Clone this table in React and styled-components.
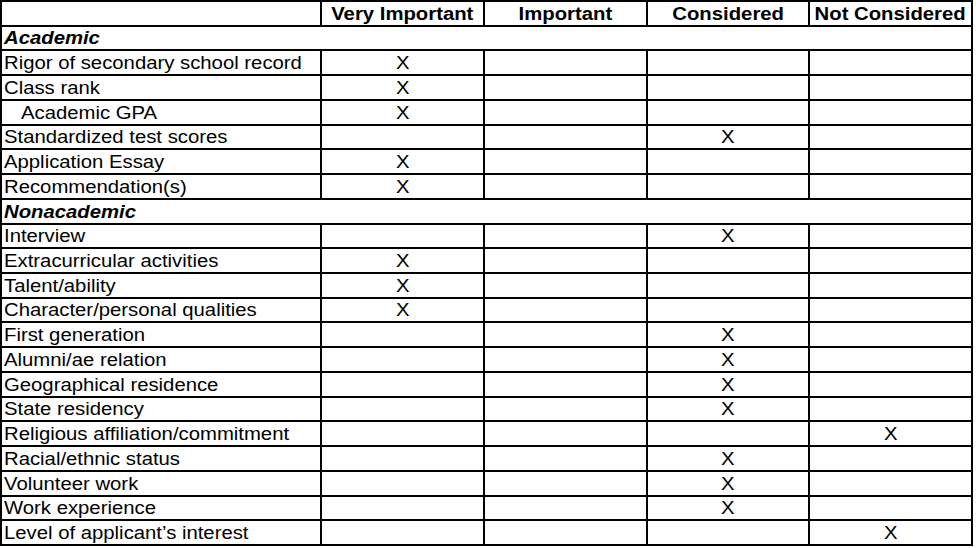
import React from "react";
import styled, { createGlobalStyle } from "styled-components";

const Global = createGlobalStyle`
  html, body { margin: 0; padding: 0; background: #fff; }
  body { font-family: "Liberation Sans", Arial, sans-serif; color: #000; }
`;

const Table = styled.div`
  display: grid;
  grid-template-columns: 318px 161px 161px 160px 161px;
  grid-template-rows: repeat(22, 1fr);
  gap: 2px;
  padding: 2px;
  width: 973px;
  height: 546px;
  box-sizing: border-box;
  background: #000;
`;

const Cell = styled.div`
  background: #fff;
  display: flex;
  align-items: center;
  justify-content: ${(p) => (p.$center ? "center" : "flex-start")};
  padding-left: ${(p) => (p.$center ? 0 : p.$indent ? 19 : 2)}px;
  padding-top: 2px;
  box-sizing: border-box;
  overflow: hidden;
  min-width: 0;
  min-height: 0;
  grid-column: ${(p) => (p.$span ? "1 / -1" : "auto")};
`;

const Label = styled.span`
  display: inline-block;
  font-size: 17.5px;
  line-height: 1.1;
  white-space: nowrap;
  font-weight: ${(p) => (p.$bold ? 700 : 400)};
  font-style: ${(p) => (p.$italic ? "italic" : "normal")};
  transform: scaleX(1.16);
  transform-origin: ${(p) => (p.$center ? "center" : "left")} center;
`;

const headers = ["Very Important", "Important", "Considered", "Not Considered"];

const rows = [
  { cat: "Academic" },
  { label: "Rigor of secondary school record", mark: 0 },
  { label: "Class rank", mark: 0 },
  { label: "Academic GPA", mark: 0, indent: true },
  { label: "Standardized test scores", mark: 2 },
  { label: "Application Essay", mark: 0 },
  { label: "Recommendation(s)", mark: 0 },
  { cat: "Nonacademic" },
  { label: "Interview", mark: 2 },
  { label: "Extracurricular activities", mark: 0 },
  { label: "Talent/ability", mark: 0 },
  { label: "Character/personal qualities", mark: 0 },
  { label: "First generation", mark: 2 },
  { label: "Alumni/ae relation", mark: 2 },
  { label: "Geographical residence", mark: 2 },
  { label: "State residency", mark: 2 },
  { label: "Religious affiliation/commitment", mark: 3 },
  { label: "Racial/ethnic status", mark: 2 },
  { label: "Volunteer work", mark: 2 },
  { label: "Work experience", mark: 2 },
  { label: "Level of applicant\u2019s interest", mark: 3 },
];

export default function App() {
  return (
    <>
      <Global />
      <Table>
        <Cell />
        {headers.map((h) => (
          <Cell key={h} $center>
            <Label $bold $center>{h}</Label>
          </Cell>
        ))}
        {rows.map((r, i) =>
          r.cat ? (
            <Cell key={i} $span>
              <Label $bold $italic>{r.cat}</Label>
            </Cell>
          ) : (
            <React.Fragment key={i}>
              <Cell $indent={r.indent}>
                <Label>{r.label}</Label>
              </Cell>
              {[0, 1, 2, 3].map((c) => (
                <Cell key={c} $center>
                  {r.mark === c ? <Label $center>X</Label> : null}
                </Cell>
              ))}
            </React.Fragment>
          )
        )}
      </Table>
    </>
  );
}
